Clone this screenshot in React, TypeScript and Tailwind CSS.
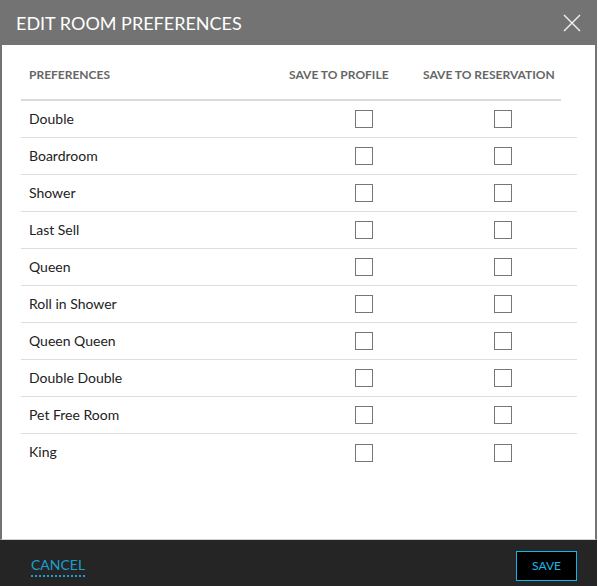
const rows = [
  "Double",
  "Boardroom",
  "Shower",
  "Last Sell",
  "Queen",
  "Roll in Shower",
  "Queen Queen",
  "Double Double",
  "Pet Free Room",
  "King",
];

function CloseIcon() {
  return (
    <svg width="18" height="18" viewBox="0 0 18 18" fill="none">
      <path d="M1 1L17 17M17 1L1 17" stroke="#f2f2f2" strokeWidth="1.4" />
    </svg>
  );
}

function Box() {
  return <div className="w-[18px] h-[18px] border border-[#767676] bg-white" />;
}

export default function App() {
  return (
    <div className="w-[597px] h-[586px] flex flex-col overflow-hidden font-['Lato',sans-serif]">
      {/* header */}
      <div className="h-[45px] shrink-0 bg-[#737373] flex items-center justify-between pl-4 pr-4">
        <h1 className="text-[18px] leading-none text-white">EDIT ROOM PREFERENCES</h1>
        <CloseIcon />
      </div>

      {/* body */}
      <div className="flex-1 bg-white border-x-2 border-[#737373] border-b border-b-[#cfcfcf] pl-[19px] pr-[18px]">
        <div className="w-[540px] grid grid-cols-[268px_134px_1fr] pt-[22px] pb-[16px] border-b-2 border-[#dadada] text-[12px] leading-4 font-bold text-[#666]">
          <span className="pl-2">PREFERENCES</span>
          <span>SAVE TO PROFILE</span>
          <span>SAVE TO RESERVATION</span>
        </div>
        {rows.map((name, i) => (
          <div
            key={name}
            className={`grid grid-cols-[334px_18px_121px_18px_1fr] items-center h-[37px] ${
              i < rows.length - 1 ? "border-b border-[#dddddd]" : ""
            }`}
          >
            <span className="pl-2 mb-[2px] text-[14px] text-[#222]">{name}</span>
            <Box />
            <span />
            <Box />
            <span />
          </div>
        ))}
      </div>

      {/* footer */}
      <div className="h-[46px] shrink-0 bg-[#252525] flex items-center justify-between pl-[31px] pr-[20px]">
        <button className="text-[14px] leading-5 text-[#1a9fd0] border-b-2 border-dotted border-[#1a9fd0] mt-[5px]">
          CANCEL
        </button>
        <button className="w-[61px] h-[30px] mt-[6px] bg-black border border-[#13b5ea] text-[12px] text-[#1ab8e8]">
          SAVE
        </button>
      </div>
    </div>
  );
}
